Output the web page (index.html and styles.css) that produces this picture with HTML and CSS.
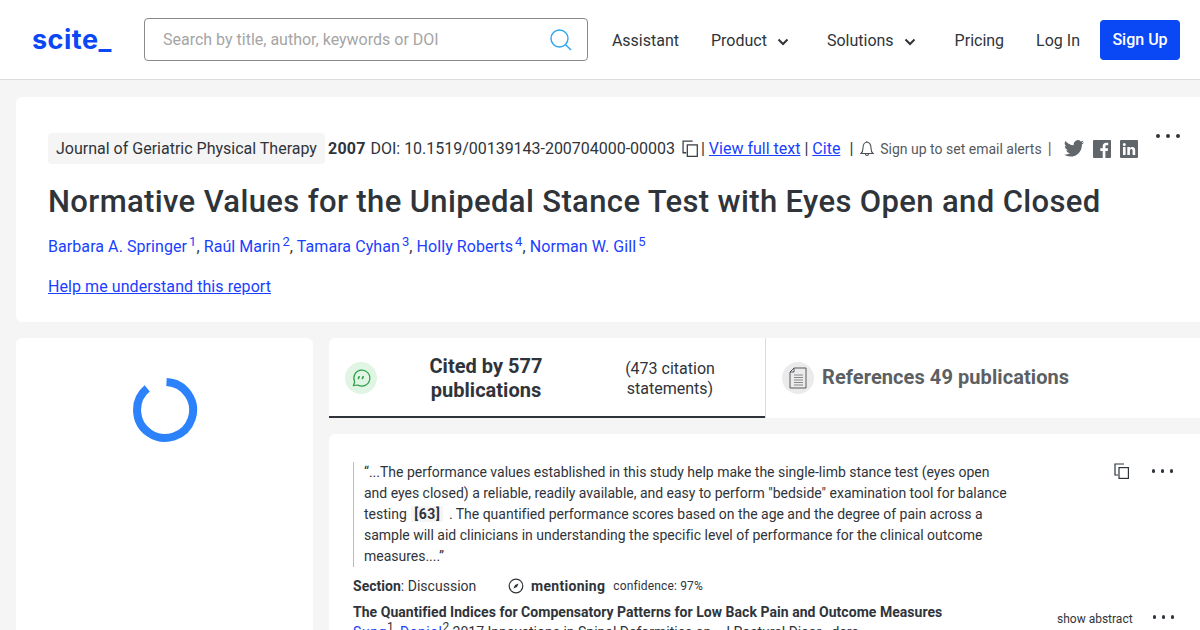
FILE: index.html
```html
<!DOCTYPE html>
<html lang="en">
<head>
<meta charset="utf-8">
<title>Normative Values for the Unipedal Stance Test with Eyes Open and Closed</title>
<link rel="stylesheet" href="styles.css">
</head>
<body>
<header class="topbar">
  <a class="logo">scite_</a>
  <div class="search">
    <span class="search-text">Search by title, author, keywords or DOI</span>
    <svg class="search-icon" width="24" height="24" viewBox="0 0 24 24" fill="none" stroke="#2aa5f5" stroke-width="1.4"><circle cx="10.5" cy="10.5" r="8.5"/><path d="M16.7 16.7L22 22"/></svg>
  </div>
  <nav class="nav">
    <a class="nav-a n1">Assistant</a>
    <a class="nav-a n2">Product<svg class="chev" width="12" height="8" viewBox="0 0 12 8" fill="none" stroke="#2f343a" stroke-width="2"><path d="M1.5 1.500L6 6l4.500-4.500"/></svg></a>
    <a class="nav-a n3">Solutions<svg class="chev" width="12" height="8" viewBox="0 0 12 8" fill="none" stroke="#2f343a" stroke-width="2"><path d="M1.5 1.500L6 6l4.500-4.500"/></svg></a>
    <a class="nav-a n4">Pricing</a>
    <a class="nav-a n5">Log In</a>
    <a class="signup">Sign Up</a>
  </nav>
</header>
<main class="page">
  <section class="paper">
    <div class="meta">
      <span class="journal">Journal of Geriatric Physical Therapy</span>
      <b class="year">2007</b>
      <span class="doi">DOI: 10.1519/00139143-200704000-00003</span>
      <svg class="copy" width="17" height="17" viewBox="0 0 16 16" fill="none" stroke="#3a3f45" stroke-width="1.2"><path d="M10 1H1v11h3"/><rect x="5" y="4.6" width="9.4" height="10.8" fill="#fff"/></svg>
      <span class="bar b1">|</span><a class="link lk1">View full text</a><span class="bar b2">|</span><a class="link">Cite</a>
      <span class="bar b3">|</span>
      <svg class="bell" width="14" height="17" viewBox="0 0 14 17" fill="none" stroke="#4a4f55" stroke-width="1.1"><path d="M1 13.500h12c-1.600-1.300-2-3-2-5.500C11 4.500 9.500 2.300 7 2.300S3 4.500 3 8c0 2.500-.4 4.200-2 5.500zM6.900 1v1.300M5.500 14c0 2 3 2 3 0"/></svg>
      <span class="alerts">Sign up to set email alerts</span>
      <span class="bar b4">|</span>
      <svg class="soc s1" width="20" height="17" viewBox="0 0 24 20"><path fill="#61666b" d="M24 2.400a9.800 9.800 0 0 1-2.800.8A4.900 4.900 0 0 0 23.300.500a9.800 9.800 0 0 1-3.100 1.200 4.900 4.900 0 0 0-8.400 4.500A14 14 0 0 1 1.700 1a4.900 4.900 0 0 0 1.500 6.600 4.900 4.900 0 0 1-2.200-.6c0 2.400 1.700 4.500 3.900 5a4.900 4.900 0 0 1-2.200.1 4.900 4.900 0 0 0 4.600 3.400A9.900 9.900 0 0 1 0 17.500 13.900 13.900 0 0 0 7.500 19.700c9.100 0 14.300-7.700 14-14.600A10 10 0 0 0 24 2.400z"/></svg>
      <svg class="soc s2" width="18" height="18" viewBox="0 0 18 18"><path fill="#61666b" d="M1 0h16a1 1 0 0 1 1 1v16a1 1 0 0 1-1 1h-4.600v-7h2.300l.4-2.700h-2.700V6.500c0-.8.300-1.300 1.400-1.300h1.400V2.800c-.3 0-1.100-.1-2-.1-2.100 0-3.500 1.300-3.500 3.600v2H7.300V11h2.400v7H1a1 1 0 0 1-1-1V1a1 1 0 0 1 1-1z"/></svg>
      <svg class="soc s3" width="18" height="18" viewBox="0 0 18 18"><path fill="#61666b" fill-rule="evenodd" d="M1 0h16a1 1 0 0 1 1 1v16a1 1 0 0 1-1 1H1a1 1 0 0 1-1-1V1a1 1 0 0 1 1-1zm2 7v8h2.600V7zm1.300-4a1.500 1.500 0 1 0 0 3 1.500 1.500 0 0 0 0-3zM7.300 7v8h2.600v-4.200c0-2.300 2.700-2.400 2.700 0V15h2.600v-4.900c0-3.900-4-3.800-5.300-1.900V7z"/></svg>
      <span class="dots top-dots"><i></i><i></i><i></i></span>
    </div>
    <h1 class="title">Normative Values for the Unipedal Stance Test with Eyes Open and Closed</h1>
    <p class="authors"><a>Barbara A. Springer</a><sup>1</sup>, <a>Raúl Marin</a><sup>2</sup>, <a>Tamara Cyhan</a><sup>3</sup>, <a>Holly Roberts</a><sup>4</sup>, <a>Norman W. Gill</a><sup>5</sup></p>
    <a class="help">Help me understand this report</a>
  </section>
  <div class="columns">
    <aside class="side">
      <svg class="spinner" width="66" height="66" viewBox="0 0 66 66" fill="none" stroke="#2b82fb" stroke-width="8"><path d="M34.500 5A28 28 0 1 1 15.200 11.400"/></svg>
    </aside>
    <div class="content">
      <div class="tabs">
        <div class="tab tab-on">
          <span class="tab-ic green"><svg width="22" height="22" viewBox="0 0 22 22" fill="none" stroke="#2e9e4a" stroke-width="1.200"><path d="M3.500 18.500l1.200-3.800A8 8 0 1 1 7.800 18z"/><path stroke-width="1.500" d="M9 9v1.500L8 12M13 9v1.500L12 12"/></svg></span>
          <strong class="tab-t">Cited by 577 publications</strong>
          <span class="tab-s">(473 citation statements)</span>
        </div>
        <div class="tab tab-off">
          <span class="tab-ic grey"><svg width="18" height="22" viewBox="0 0 18 22" fill="none" stroke="#55595e" stroke-width="1"><path d="M5 1h12v20H1V5zM5 1v4H1"/><path d="M5 8h9M5 10.500h9M5 13h9M5 15.500h9M5 18h9" stroke="#888"/></svg></span>
          <strong class="ref-t">References 49 publications</strong>
        </div>
      </div>
      <article class="card">
        <div class="actions">
          <svg class="copy-b" width="16" height="16" viewBox="0 0 16 16" fill="none" stroke="#2f343a" stroke-width="1.200"><path d="M10 1H1v11h3"/><rect x="5" y="4.600" width="9.400" height="10.800" fill="#fff"/></svg>
          <span class="dots small"><i></i><i></i><i></i></span>
        </div>
        <blockquote class="quote">“...The performance values established in this study help make the single-limb stance test (eyes open and eyes closed) a reliable, readily available, and easy to perform "bedside" examination tool for balance testing <b class="cite">[63]</b> . The quantified performance scores based on the age and the degree of pain across a sample will aid clinicians in understanding the specific level of performance for the clinical outcome measures....”</blockquote>
        <div class="info">
          <span class="sect"><b>Section</b>: Discussion</span>
          <svg class="mention-ic" width="16" height="16" viewBox="0 0 16 16" fill="none" stroke="#2f343a" stroke-width="1.200"><circle cx="8" cy="8" r="6.800"/><path d="M10.600 5.400L9 9 5.400 10.600 7 7z" fill="#2f343a" stroke="none"/></svg>
          <b class="mention">mentioning</b>
          <span class="conf">confidence: 97%</span>
        </div>
        <div class="source">
          <div class="source-main">
            <div class="source-t">The Quantified Indices for Compensatory Patterns for Low Back Pain and Outcome Measures</div>
            <div class="source-a"><a>Sung</a><sup>1</sup>, <a>Daniel</a><sup>2</sup> 2017 Innovations in Spinal Deformities an...J Postural Disor...ders</div>
          </div>
          <span class="show">show abstract</span>
          <span class="dots small"><i></i><i></i><i></i></span>
        </div>
      </article>
    </div>
  </div>
</main>
</body>
</html>
```
FILE: styles.css
```css
* { box-sizing: border-box; }
html, body { margin: 0; height: 630px; overflow: hidden; }
body { background: #f5f5f5; font-family: "Roboto", "Liberation Sans", sans-serif; color: #2f343a; font-size: 16px; }
a { color: #1a40ff; }
.topbar { height: 80px; background: #fff; border-bottom: 1px solid #dcdcdc; display: flex; align-items: center; padding: 0 20px 0 32px; }
.logo { color: #0a47f5; font: 700 27px/1 "Inter", sans-serif; width: 112px; letter-spacing: 0.5px; }
.search { width: 444px; height: 43px; border: 1px solid #8a8a8a; border-radius: 4px; display: flex; align-items: center; justify-content: space-between; padding: 0 14px 0 18px; }
.search-text { color: #a5a5a5; font-size: 16px; }
.search-icon { display: block; }
.nav { display: flex; align-items: center; margin-left: auto; }
.nav-a { color: #2f343a; display: flex; align-items: center; padding-top: 2px; }
.chev { margin-left: 10px; margin-top: 2px; }
.n2 { margin-left: 32px; }
.n3 { margin-left: 38px; }
.n4 { margin-left: 39px; }
.n5 { margin-left: 32px; }
.signup { margin-left: 20px; width: 80px; height: 40px; background: #0a47f5; color: #fff; border-radius: 4px; display: flex; align-items: center; justify-content: center; font-weight: 500; }
.page { padding: 17px 0 0 16px; display: flex; flex-direction: column; gap: 16px; }
.paper { background: #fff; border-radius: 6px 0 0 6px; height: 225px; padding: 36px 0 0 32px; position: relative; }
.meta { display: flex; align-items: center; height: 31px; white-space: nowrap; }
.journal { background: #f5f5f5; border-radius: 4px; height: 31px; padding: 0 8px; display: flex; align-items: center; width: 277px; }
.year { margin-left: 3px; font-weight: 700; letter-spacing: 0.2px; }
.doi { margin-left: 5px; letter-spacing: -0.02px; }
.copy { margin-left: 7px; }
.bar { color: #2f343a; margin: 0 4px; }
.b1 { margin-left: 2px; }
.b3 { margin-left: 9px; margin-right: 7px; }
.b4 { margin-left: 6px; margin-right: 10px; color: #8a5a30; }
.link { text-decoration: underline; }
.bell { margin-right: 6px; }
.alerts { font-size: 14px; color: #55595e; }
.soc { margin-left: 9px; display: block; }
.s1 { margin-left: 2px; }
.dots { display: inline-flex; gap: 6px; align-items: center; }
.dots i { width: 4px; height: 4px; border-radius: 50%; background: #2f343a; display: block; }
.dots.small { gap: 5.500px; }
.dots.small i { width: 3.500px; height: 3.500px; }
.top-dots { position: absolute; top: 37px; right: 20px; }
.title { margin: 20px 0 0; font-size: 31px; line-height: 36px; font-weight: 500; letter-spacing: 0.37px; color: #2f343a; white-space: nowrap; }
.authors { margin: 15px 0 0; height: 24px; line-height: 24px; color: #2f343a; white-space: nowrap; letter-spacing: 0.07px; }
.authors sup { font-size: 13px; line-height: 0; margin-left: 2px; color: #1a40ff; }
.help { display: block; margin-top: 16px; line-height: 24px; text-decoration: underline; letter-spacing: 0.07px; }
.columns { display: flex; gap: 16px; align-items: flex-start; }
.side { width: 297px; height: 400px; background: #fff; border-radius: 6px 6px 0 0; padding: 39px 0 0 116px; }
.spinner { display: block; }
.content { flex: 1; display: flex; flex-direction: column; gap: 16px; }
.tabs { display: flex; height: 80px; background: #fff; border-radius: 6px 0 0 0; }
.tab { display: flex; align-items: center; }
.tab-on { width: 436px; border-bottom: 2px solid #2f343a; padding-left: 16px; }
.tab-off { flex: 1; border-left: 1px solid #dcdcdc; padding-left: 16px; }
.tab-ic { width: 32px; height: 32px; border-radius: 50%; display: flex; align-items: center; justify-content: center; flex: none; }
.green { background: #e0f5e3; margin-top: 2px; }
.grey { background: #ebebeb; }
.tab-t { width: 150px; margin-left: 34px; padding-top: 2px; font-size: 20px; line-height: 24px; font-weight: 700; text-align: center; letter-spacing: 0.02px; }
.tab-s { width: 130px; margin-left: 44px; padding-top: 4px; line-height: 20px; text-align: center; }
.ref-t { font-size: 20px; font-weight: 700; color: #5c5f63; margin-left: 8px; margin-top: -2px; letter-spacing: 0.08px; }
.card { background: #fff; border-radius: 6px 0 0 0; height: 200px; padding: 28px 0 0 24px; position: relative; }
.actions { position: absolute; top: 29px; right: 27px; display: flex; align-items: center; gap: 22px; }
.quote { margin: 0; width: 660px; padding-left: 10px; border-left: 1px solid #bbb; font-size: 14px; line-height: 21px; color: #2f343a; letter-spacing: -0.01px; }
.cite { margin: 0 2px 0 1px; padding: 0 3px; background: #f5f5f5; letter-spacing: 0.6px; }
.info { display: flex; align-items: center; margin-top: 8px; height: 21px; font-size: 14px; white-space: nowrap; }
.sect { width: 155px; letter-spacing: 0.02px; }
.mention-ic { display: block; }
.mention { margin-left: 7px; letter-spacing: 0.3px; }
.conf { margin-left: 8px; font-size: 12px; letter-spacing: 0.15px; }
.source { display: flex; align-items: flex-start; margin-top: 6px; font-size: 14px; }
.source-main { width: 704px; white-space: nowrap; }
.source-t { font-weight: 700; line-height: 20px; letter-spacing: 0.04px; }
.source-a { font-size: 14px; line-height: 20px; }
.source-a a { letter-spacing: 0.6px; }
.source-a sup { font-size: 12px; line-height: 0; }
.show { font-size: 12px; margin-top: 10px; }
.source > .dots { margin-left: 20px; margin-top: 13px; }
```
